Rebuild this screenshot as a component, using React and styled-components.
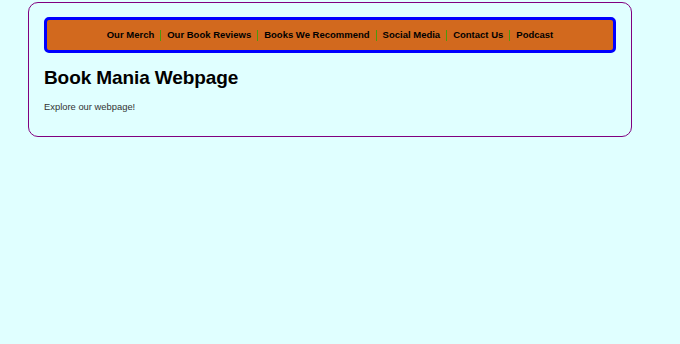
import React from "react";
import styled, { createGlobalStyle } from "styled-components";

const GlobalStyle = createGlobalStyle`
  html, body {
    margin: 0;
    padding: 0;
    background: #e0ffff;
  }
  body {
    font-family: "Liberation Sans", Arial, sans-serif;
  }
`;

const Card = styled.div`
  box-sizing: border-box;
  width: 604px;
  margin: 2px 0 0 28px;
  padding: 14px 15px 23px;
  border: 1px solid #800080;
  border-radius: 10px;
`;

const Nav = styled.nav`
  box-sizing: border-box;
  height: 36px;
  display: flex;
  justify-content: center;
  align-items: center;
  background: #d2691e;
  border: 3px solid #0000ff;
  border-radius: 5px;
`;

const NavLink = styled.a`
  font-size: 9.5px;
  font-weight: bold;
  color: #000;
  text-decoration: none;
  padding: 0 6px;
  line-height: 12px;
`;

const Divider = styled.span`
  width: 1px;
  height: 11px;
  background: #4c9a0e;
  flex: none;
`;

const Title = styled.h1`
  font-size: 19px;
  font-weight: bold;
  letter-spacing: -0.1px;
  margin: 13px 0 0;
  line-height: 24px;
`;

const Intro = styled.p`
  font-size: 9.4px;
  color: #333;
  margin: 11px 0 0;
  line-height: 12px;
`;

const links = [
  "Our Merch",
  "Our Book Reviews",
  "Books We Recommend",
  "Social Media",
  "Contact Us",
  "Podcast",
];

export default function App() {
  return (
    <>
      <GlobalStyle />
      <Card>
        <Nav>
          {links.map((l, i) => (
            <React.Fragment key={l}>
              {i > 0 && <Divider />}
              <NavLink href="#">{l}</NavLink>
            </React.Fragment>
          ))}
        </Nav>
        <Title>Book Mania Webpage</Title>
        <Intro>Explore our webpage!</Intro>
      </Card>
    </>
  );
}
